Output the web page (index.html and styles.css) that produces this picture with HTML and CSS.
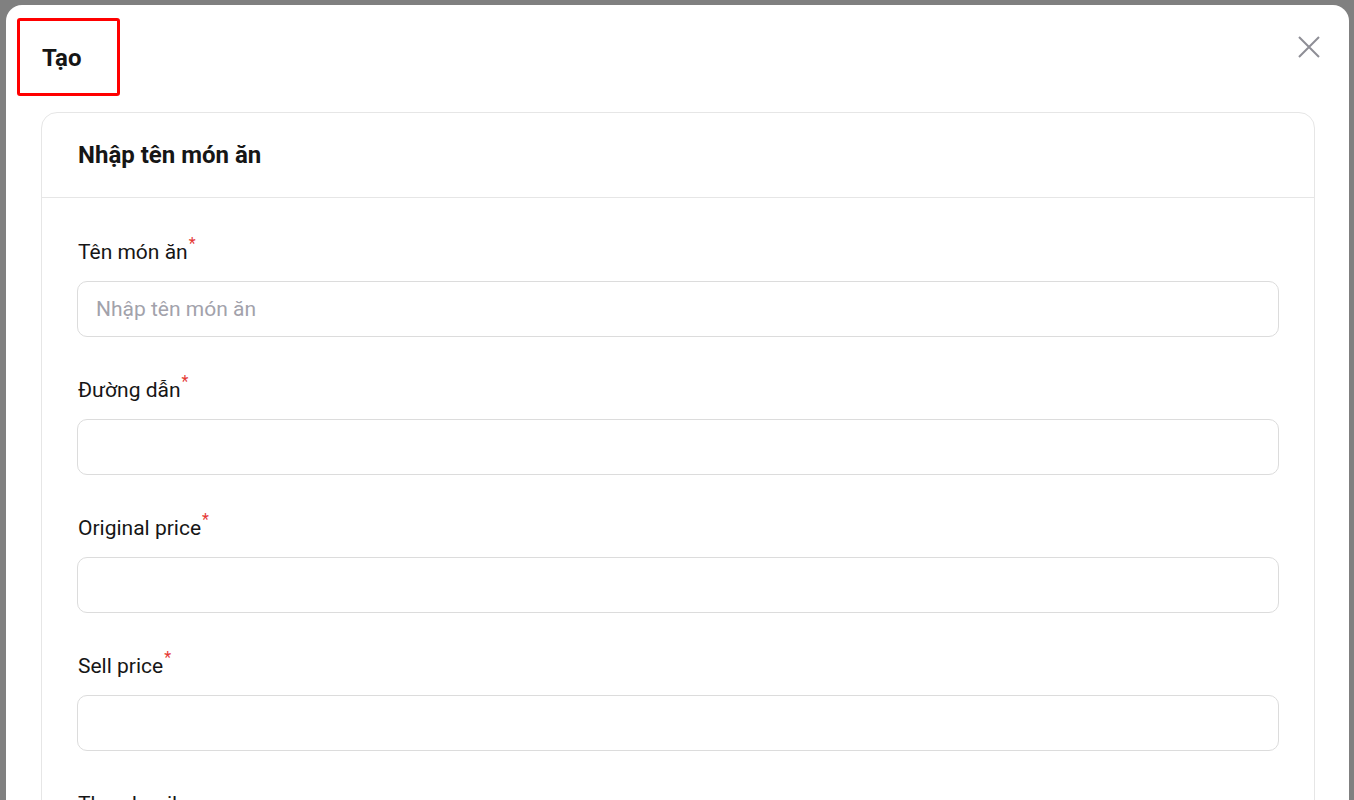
FILE: index.html
```html
<!DOCTYPE html>
<html lang="vi">
<head>
<meta charset="utf-8">
<title>Tạo</title>
<link rel="stylesheet" href="styles.css">
</head>
<body>
<div class="modal">
  <div class="modal-header">
    <div class="title-box"><h1 class="title">Tạo</h1></div>
    <button class="close" aria-label="Close">
      <svg width="22" height="22" viewBox="0 0 22 22"><path d="M1 1L21 21M21 1L1 21" stroke="#8e8e96" stroke-width="2" fill="none"/></svg>
    </button>
  </div>
  <div class="card">
    <div class="card-header">Nhập tên món ăn</div>
    <div class="card-body">
      <div class="field">
        <label class="label">Tên món ăn<span class="req">*</span></label>
        <div class="input"><span class="placeholder">Nhập tên món ăn</span></div>
      </div>
      <div class="field">
        <label class="label">Đường dẫn<span class="req">*</span></label>
        <div class="input"></div>
      </div>
      <div class="field">
        <label class="label">Original price<span class="req">*</span></label>
        <div class="input"></div>
      </div>
      <div class="field">
        <label class="label">Sell price<span class="req">*</span></label>
        <div class="input"></div>
      </div>
      <div class="field">
        <label class="label">Thumbnail</label>
        <div class="input"></div>
      </div>
    </div>
  </div>
</div>
</body>
</html>
```
FILE: styles.css
```css
html, body {
  margin: 0;
  padding: 0;
  height: 800px;
  overflow: hidden;
}
body {
  background: #808080;
  font-family: Roboto, "Noto Sans", sans-serif;
  color: #161616;
  padding-top: 5px;
  padding-left: 6px;
  box-sizing: border-box;
}
.modal {
  width: 1343px;
  background: #fff;
  border-radius: 16px;
  padding: 0 34px 40px 35px;
  box-sizing: border-box;
}
.modal-header {
  display: flex;
  justify-content: space-between;
  align-items: flex-start;
  padding: 13px 0 16px 0;
  margin-left: -24px;
  margin-right: -5px;
}
.title-box {
  width: 103px;
  height: 78px;
  border: 3px solid #ff0000;
  border-radius: 3px;
  box-sizing: border-box;
  display: flex;
  align-items: center;
  padding-left: 22px;
}
.title {
  margin: 0;
  font-size: 24px;
  font-weight: 700;
  color: #161616;
  line-height: 28px;
  padding-top: 1px;
}
.close {
  margin-top: 18px;
  background: none;
  border: 0;
  padding: 0;
  width: 22px;
  height: 22px;
  display: flex;
}
.card {
  border: 1px solid #e6e6e6;
  border-radius: 16px;
}
.card-header {
  height: 84px;
  display: flex;
  align-items: center;
  padding-left: 36px;
  font-size: 24px;
  font-weight: 700;
  border-bottom: 1px solid #e6e6e6;
  color: #161616;
}
.card-body {
  padding: 42px 35px 0 35px;
}
.field {
  margin-bottom: 41px;
}
.label {
  display: block;
  font-size: 21px;
  line-height: 24px;
  height: 24px;
  margin-bottom: 17px;
  padding-left: 1px;
  color: #161616;
}
.req {
  color: #e53935;
  font-size: 16px;
  position: relative;
  top: -10px;
  margin-left: 1px;
}
.input {
  height: 56px;
  border: 1px solid #dcdcdc;
  border-radius: 10px;
  box-sizing: border-box;
  display: flex;
  align-items: center;
  padding-left: 18px;
}
.placeholder {
  color: #a2a2ab;
  font-size: 21px;
}
```
